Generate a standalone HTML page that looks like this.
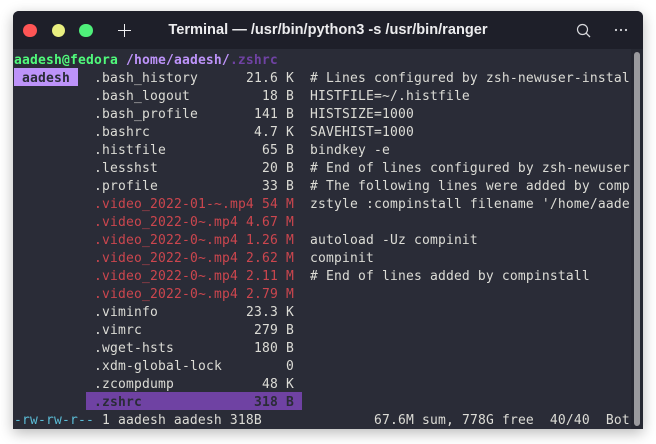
<!DOCTYPE html>
<html><head><meta charset="utf-8">
<style>
html,body{margin:0;padding:0;width:656px;height:444px;overflow:hidden;background:#fff}
#win{position:absolute;left:13px;top:11px;width:630px;height:418px;background:#2a2c37;border-radius:6px 6px 0 0;box-shadow:0 4px 14px rgba(0,0,0,.28);overflow:hidden}
#bar{position:absolute;left:0;top:0;width:630px;height:38px;background:#1e1f29}
.dot{position:absolute;top:13px;width:13.4px;height:13.4px;border-radius:50%}
#title{position:absolute;left:0;top:0;width:630px;height:38px;text-align:center;color:#ececee;font:bold 14.6px/38px "Liberation Sans",sans-serif}
#gut{position:absolute;left:618px;top:38px;width:12px;height:380px;background:#262832}
#sb{position:absolute;left:621px;top:41px;width:6px;height:374px;background:#9a9a9e;border-radius:3px}
.r{position:absolute;margin-top:1px;height:18px;line-height:18px;font-family:"DejaVu Sans Mono","Liberation Mono",monospace;font-size:13px;letter-spacing:.17px;white-space:pre;color:#dcdcd6}
.s{left:201px;width:80px;text-align:right}
.v{color:#cc464e}
.b{font-weight:bold}
</style></head><body>
<div id="win">
<div id="bar"></div>
<div class="dot" style="left:10.3px;background:#ff5555"></div>
<div class="dot" style="left:38.7px;background:#e9ef80"></div>
<div class="dot" style="left:66.3px;background:#4ff07a"></div>
<svg style="position:absolute;left:105px;top:13px" width="13" height="13"><path d="M6.5 0V13M0 6.5H13" stroke="#f0f0f2" stroke-width="1" fill="none"/></svg>
<div id="title">Terminal — /usr/bin/python3 -s /usr/bin/ranger</div>
<svg style="position:absolute;left:562px;top:11px" width="18" height="18"><circle cx="7.5" cy="7.5" r="5" stroke="#d8d8dc" stroke-width="1.2" fill="none"/><path d="M11.2 11.2L15 15" stroke="#d8d8dc" stroke-width="1.3"/></svg>
<svg style="position:absolute;left:600px;top:16px" width="16" height="6"><circle cx="3" cy="3" r="1.1" fill="#d8d8dc"/><circle cx="8" cy="3" r="1.1" fill="#d8d8dc"/><circle cx="13" cy="3" r="1.1" fill="#d8d8dc"/></svg>
<div id="gut"></div><div id="sb"></div>
<div style="position:absolute;left:1px;top:57px;width:64px;height:18px;background:#bd93f9"></div>
<div style="position:absolute;left:73px;top:381px;width:216px;height:18px;background:#6f42a3"></div>

<div class="r b" style="left:1px;top:40px"><span style="color:#50fa7b">aadesh@fedora</span> <span style="color:#bd93f9">/home/aadesh/</span><span style="color:#6f42a3">.zshrc</span></div>
<div class="r b" style="left:9px;top:58px;color:#2a2c37">aadesh</div>

<div class="r" style="left:81px;top:58px">.bash_history</div><div class="r s" style="top:58px">21.6 K</div><div class="r" style="left:297px;top:58px"># Lines configured by zsh-newuser-instal</div>
<div class="r" style="left:81px;top:76px">.bash_logout</div><div class="r s" style="top:76px">18 B</div><div class="r" style="left:297px;top:76px">HISTFILE=~/.histfile</div>
<div class="r" style="left:81px;top:94px">.bash_profile</div><div class="r s" style="top:94px">141 B</div><div class="r" style="left:297px;top:94px">HISTSIZE=1000</div>
<div class="r" style="left:81px;top:112px">.bashrc</div><div class="r s" style="top:112px">4.7 K</div><div class="r" style="left:297px;top:112px">SAVEHIST=1000</div>
<div class="r" style="left:81px;top:130px">.histfile</div><div class="r s" style="top:130px">65 B</div><div class="r" style="left:297px;top:130px">bindkey -e</div>
<div class="r" style="left:81px;top:148px">.lesshst</div><div class="r s" style="top:148px">20 B</div><div class="r" style="left:297px;top:148px"># End of lines configured by zsh-newuser</div>
<div class="r" style="left:81px;top:166px">.profile</div><div class="r s" style="top:166px">33 B</div><div class="r" style="left:297px;top:166px"># The following lines were added by comp</div>
<div class="r v" style="left:81px;top:184px">.video_2022-01-~.mp4</div><div class="r s v" style="top:184px">54 M</div><div class="r" style="left:297px;top:184px">zstyle :compinstall filename '/home/aade</div>
<div class="r v" style="left:81px;top:202px">.video_2022-0~.mp4</div><div class="r s v" style="top:202px">4.67 M</div>
<div class="r v" style="left:81px;top:220px">.video_2022-0~.mp4</div><div class="r s v" style="top:220px">1.26 M</div><div class="r" style="left:297px;top:220px">autoload -Uz compinit</div>
<div class="r v" style="left:81px;top:238px">.video_2022-0~.mp4</div><div class="r s v" style="top:238px">2.62 M</div><div class="r" style="left:297px;top:238px">compinit</div>
<div class="r v" style="left:81px;top:256px">.video_2022-0~.mp4</div><div class="r s v" style="top:256px">2.11 M</div><div class="r" style="left:297px;top:256px"># End of lines added by compinstall</div>
<div class="r v" style="left:81px;top:274px">.video_2022-0~.mp4</div><div class="r s v" style="top:274px">2.79 M</div>
<div class="r" style="left:81px;top:292px">.viminfo</div><div class="r s" style="top:292px">23.3 K</div>
<div class="r" style="left:81px;top:310px">.vimrc</div><div class="r s" style="top:310px">279 B</div>
<div class="r" style="left:81px;top:328px">.wget-hsts</div><div class="r s" style="top:328px">180 B</div>
<div class="r" style="left:81px;top:346px">.xdm-global-lock</div><div class="r s" style="top:346px">0</div>
<div class="r" style="left:81px;top:364px">.zcompdump</div><div class="r s" style="top:364px">48 K</div>
<div class="r b" style="left:81px;top:382px;color:#2a2c37">.zshrc</div><div class="r s b" style="top:382px;color:#2a2c37">318 B</div>

<div class="r" style="left:1px;top:400px"><span style="color:#5bbcd6">-rw-rw-r--</span> 1 aadesh aadesh 318B</div>
<div class="r" style="left:361px;top:400px">67.6M sum, 778G free  40/40  Bot</div>
</div>
</body></html>
